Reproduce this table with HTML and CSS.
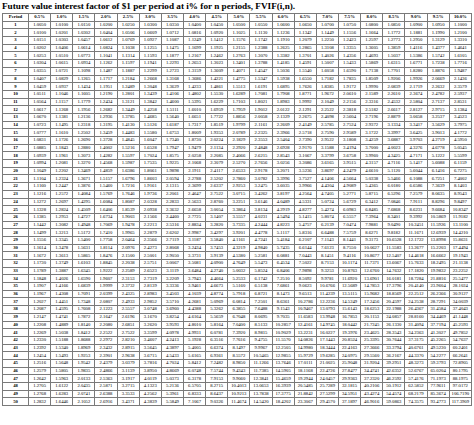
FILE: index.html
```html
<!DOCTYPE html>
<html>
<head>
<meta charset="utf-8">
<link rel="stylesheet" href="styles.css">
</head>
<body>
<h1 class="title">Future value interest factor of $1 per period at i% for n periods, FVIF(i,n).</h1>
<table class="fvif">
<thead><tr id="head"><th class="period">Period</th></tr></thead>
<tbody id="body"></tbody>
</table>
<script src="script.js"></script>
</body>
</html>
```
FILE: styles.css
```css
html, body { margin: 0; padding: 0; background: #fff; }
body { padding: 0 2px; font-family: "Liberation Serif", "Times New Roman", serif; color: #000; }
.title { font-size: 9.2px; font-weight: bold; margin: 0; height: 13px; line-height: 12px; white-space: nowrap; }
.fvif { border-collapse: collapse; width: 470px; table-layout: fixed; }
.fvif th, .fvif td { border: 1px solid #7a7a7a; padding: 0; height: 6.7px; line-height: 6px; font-size: 4.7px; text-align: center; white-space: nowrap; overflow: hidden; }
.fvif th { font-weight: bold; }
.fvif th.period { width: 25px; }
.fvif td.n { font-weight: bold; }
```
FILE: script.js
```js
var head = document.getElementById('head');
var body = document.getElementById('body');
var rates = [];
for (var i = 1; i <= 20; i++) rates.push(i * 0.5);
rates.forEach(function (r) {
  var th = document.createElement('th');
  th.textContent = r.toFixed(1) + '%';
  head.appendChild(th);
});
for (var n = 1; n <= 50; n++) {
  var tr = document.createElement('tr');
  var td = document.createElement('td');
  td.className = 'n';
  td.textContent = n;
  tr.appendChild(td);
  rates.forEach(function (r) {
    var c = document.createElement('td');
    c.textContent = Math.pow(1 + r / 100, n).toFixed(4);
    tr.appendChild(c);
  });
  body.appendChild(tr);
}
```
